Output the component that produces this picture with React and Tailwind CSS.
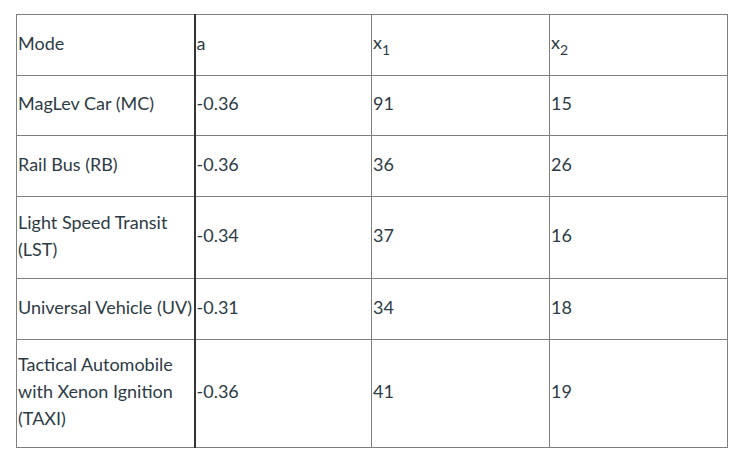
const rows = [
  { mode: "MagLev Car (MC)", a: "-0.36", x1: "91", x2: "15", h: "h-[60px]" },
  { mode: "Rail Bus (RB)", a: "-0.36", x1: "36", x2: "26", h: "h-[61px]" },
  { mode: "Light Speed Transit (LST)", a: "-0.34", x1: "37", x2: "16", h: "h-[82px]" },
  { mode: "Universal Vehicle (UV)", a: "-0.31", x1: "34", x2: "18", h: "h-[61px]" },
  { mode: "Tactical Automobile with Xenon Ignition (TAXI)", a: "-0.36", x1: "41", x2: "19", h: "h-[108px]" },
];

const cell = "border border-[#7f7f7f] px-[1px] pb-[4px] align-middle text-left font-normal";

export default function App() {
  return (
    <div className="min-h-screen bg-white pt-[14px] pl-[16px] font-['Lato',sans-serif] text-[18px] leading-[27px] text-[#2d3b45]">
      <table className="table-fixed border-collapse w-[711px]">
        <colgroup>
          <col className="w-[178px]" />
          <col className="w-[177px]" />
          <col className="w-[178px]" />
          <col className="w-[178px]" />
        </colgroup>
        <thead>
          <tr className="h-[61px]">
            <th className={`${cell} border-r-2 border-r-[#333]`}>Mode</th>
            <th className={cell}>a</th>
            <th className={cell}>
              x<sub className="bottom-0 text-[14px] leading-none align-[-6px]">1</sub>
            </th>
            <th className={cell}>
              x<sub className="bottom-0 text-[14px] leading-none align-[-6px]">2</sub>
            </th>
          </tr>
        </thead>
        <tbody>
          {rows.map((r) => (
            <tr key={r.mode} className={r.h}>
              <td className={`${cell} border-r-2 border-r-[#333]`}>{r.mode}</td>
              <td className={cell}>{r.a}</td>
              <td className={cell}>{r.x1}</td>
              <td className={cell}>{r.x2}</td>
            </tr>
          ))}
        </tbody>
      </table>
    </div>
  );
}
